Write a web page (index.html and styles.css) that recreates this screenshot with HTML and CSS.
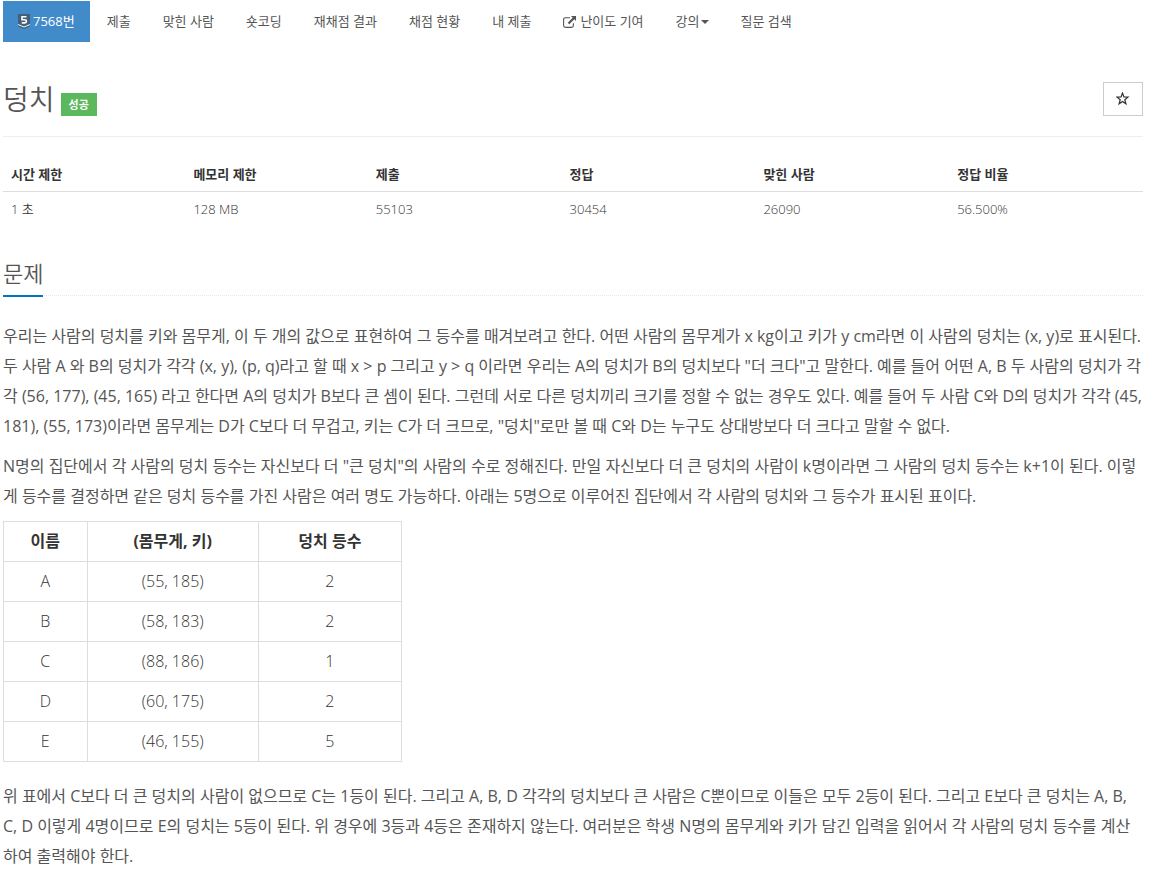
FILE: index.html
```html
<!DOCTYPE html>
<html lang="ko">
<head>
    <meta charset="UTF-8">
    <meta name="viewport" content="width=device-width, initial-scale=1.0">
    <title>7568번: 덩치</title>
    <link rel="stylesheet" href="styles.css">
</head>
<body>
    <div class="container">
        <nav>
            <ul class="problem-menu">
                <li class="active">
                    <a href="#">
                        <svg class="tier" viewBox="0 0 12 15" aria-hidden="true">
                            <path d="M0 0h12v10.500l-6 2.500l-6-2.500z" fill="#435f7a"/>
                            <path d="M0 11.300l6 2.400l6-2.400v1.200l-6 2.500l-6-2.500z" fill="#435f7a"/>
                            <path d="M0 10.500l6 2.500l6-2.500" fill="none" stroke="#fff" stroke-width="0.900"/>
                            <path d="M8.500 2.800h-4.500v2.900h2.500q1.900 0 1.900 1.600t-1.900 1.600h-2.700" fill="none" stroke="#fff" stroke-width="1.600"/>
                        </svg>
                        7568번
                    </a>
                </li>
                <li><a href="#">제출</a></li>
                <li><a href="#">맞힌 사람</a></li>
                <li><a href="#">숏코딩</a></li>
                <li><a href="#">재채점 결과</a></li>
                <li><a href="#">채점 현황</a></li>
                <li><a href="#">내 제출</a></li>
                <li>
                    <a href="#">
                        <svg class="external" viewBox="0 0 13 12" aria-hidden="true">
                            <path d="M7 1.700H2.500Q.600 1.700 .600 3.500v6Q.600 11.400 2.500 11.400h6q1.900 0 1.900-1.900V7.200" fill="none" stroke="#555" stroke-width="1.100"/>
                            <path d="M8 0h5v5l-1.700-1.700l-5 5l-1.600-1.600l5-5z" fill="#555"/>
                        </svg>
                        난이도 기여
                    </a>
                </li>
                <li><a href="#">강의<span class="caret"></span></a></li>
                <li><a href="#">질문 검색</a></li>
            </ul>
        </nav>

        <header class="page-header">
            <h1>덩치</h1>
            <span class="label-success">성공</span>
            <button type="button" class="button-star" aria-label="즐겨찾기">
                <svg viewBox="0 0 14 14" aria-hidden="true">
                    <path d="M6.500 1l1.400 3.900l4.100.200l-3.200 2.600l1.100 4.100L6.500 9.500l-3.400 2.300l1.100-4.100L1 5.100l4.100-.200z"/>
                </svg>
            </button>
        </header>

        <table class="problem-info">
            <thead>
                <tr>
                    <th class="limit">시간 제한</th>
                    <th class="limit">메모리 제한</th>
                    <th>제출</th>
                    <th>정답</th>
                    <th>맞힌 사람</th>
                    <th>정답 비율</th>
                </tr>
            </thead>
            <tbody>
                <tr>
                    <td>1 초</td>
                    <td>128 MB</td>
                    <td>55103</td>
                    <td>30454</td>
                    <td>26090</td>
                    <td>56.500%</td>
                </tr>
            </tbody>
        </table>

        <section>
            <div class="headline">
                <h2>문제</h2>
            </div>
            <div class="problem-text">
                <p>우리는 사람의 덩치를 키와 몸무게, 이 두 개의 값으로 표현하여 그 등수를 매겨보려고 한다. 어떤 사람의 몸무게가 x kg이고 키가 y cm라면 이 사람의 덩치는 (x, y)로 표시된다. 두 사람 A 와 B의 덩치가 각각 (x, y), (p, q)라고 할 때 x &gt; p 그리고 y &gt; q 이라면 우리는 A의 덩치가 B의 덩치보다 "더 크다"고 말한다. 예를 들어 어떤 A, B 두 사람의 덩치가 각각 (56, 177), (45, 165) 라고 한다면 A의 덩치가 B보다 큰 셈이 된다. 그런데 서로 다른 덩치끼리 크기를 정할 수 없는 경우도 있다. 예를 들어 두 사람 C와 D의 덩치가 각각 (45, 181), (55, 173)이라면 몸무게는 D가 C보다 더 무겁고, 키는 C가 더 크므로, "덩치"로만 볼 때 C와 D는 누구도 상대방보다 더 크다고 말할 수 없다.</p>
                <p>N명의 집단에서 각 사람의 덩치 등수는 자신보다 더 "큰 덩치"의 사람의 수로 정해진다. 만일 자신보다 더 큰 덩치의 사람이 k명이라면 그 사람의 덩치 등수는 k+1이 된다. 이렇게 등수를 결정하면 같은 덩치 등수를 가진 사람은 여러 명도 가능하다. 아래는 5명으로 이루어진 집단에서 각 사람의 덩치와 그 등수가 표시된 표이다.</p>
                <table class="rank-table">
                    <thead>
                        <tr>
                            <th class="name">이름</th>
                            <th class="size">(몸무게, 키)</th>
                            <th>덩치 등수</th>
                        </tr>
                    </thead>
                    <tbody>
                        <tr><td>A</td><td>(55, 185)</td><td>2</td></tr>
                        <tr><td>B</td><td>(58, 183)</td><td>2</td></tr>
                        <tr><td>C</td><td>(88, 186)</td><td>1</td></tr>
                        <tr><td>D</td><td>(60, 175)</td><td>2</td></tr>
                        <tr><td>E</td><td>(46, 155)</td><td>5</td></tr>
                    </tbody>
                </table>
                <p>위 표에서 C보다 더 큰 덩치의 사람이 없으므로 C는 1등이 된다. 그리고 A, B, D 각각의 덩치보다 큰 사람은 C뿐이므로 이들은 모두 2등이 된다. 그리고 E보다 큰 덩치는 A, B, C, D 이렇게 4명이므로 E의 덩치는 5등이 된다. 위 경우에 3등과 4등은 존재하지 않는다. 여러분은 학생 N명의 몸무게와 키가 담긴 입력을 읽어서 각 사람의 덩치 등수를 계산하여 출력해야 한다.</p>
            </div>
        </section>
    </div>
</body>
</html>
```
FILE: styles.css
```css
* {
    box-sizing: border-box;
}
body {
    margin: 0;
    background-color: #fff;
    color: #333;
    font-family: "Open Sans", "Noto Sans CJK KR", sans-serif;
    font-size: 13px;
    line-height: 21px;
}
.container {
    padding: 1px 8px 0 3px;
}

/* Problem menu */
.problem-menu {
    display: flex;
    flex-wrap: wrap;
    gap: 2px;
    margin: 0;
    padding: 0;
    list-style: none;
}
.problem-menu a {
    display: flex;
    align-items: center;
    padding: 10px 15px;
    color: #555;
    text-decoration: none;
}
.problem-menu .active a {
    background-color: #428bca;
    color: #fff;
}
.tier {
    width: 12px;
    height: 15px;
    margin-right: 3px;
}
.external {
    width: 13px;
    height: 12px;
    margin-right: 4px;
}
.caret {
    margin-left: 1px;
    border-top: 4px solid #555;
    border-left: 4px solid transparent;
    border-right: 4px solid transparent;
}

/* Title */
.page-header {
    display: flex;
    align-items: flex-end;
    margin-top: 40px;
    padding-bottom: 20px;
    border-bottom: 1px solid #eee;
}
h1,
h2 {
    margin: 0;
    color: #555;
    font-weight: 350;
}
h1 {
    font-size: 28px;
    line-height: 34px;
}
.label-success {
    margin-left: 6px;
    padding: 0 8px;
    background-color: #5cb85c;
    color: #fff;
    font-size: 11px;
    font-weight: 700;
    line-height: 23px;
}
.button-star {
    width: 40px;
    height: 34px;
    margin-left: auto;
    padding: 0 12px;
    border: 1px solid #ccc;
    background-color: #fff;
    cursor: pointer;
}
.button-star svg {
    display: block;
    width: 14px;
    height: 14px;
    fill: none;
    stroke: #333;
    stroke-width: 1.2;
}

/* Limits and submit counts */
.problem-info {
    width: 100%;
    margin-top: 20px;
    border-collapse: collapse;
    table-layout: fixed;
}
.problem-info th,
.problem-info td {
    padding: 7px 8px 6px;
    text-align: left;
}
.problem-info th {
    border-bottom: 1px solid #ddd;
    font-weight: 700;
}
.problem-info .limit {
    width: 16%;
}
.problem-info td {
    font-weight: 350;
}

/* Section title */
.headline {
    display: flex;
    margin: 30px 0 25px;
    border-bottom: 1px dotted #e4e9f0;
}
h2 {
    margin-bottom: -2px;
    padding-bottom: 5px;
    border-bottom: 2px solid #0076c0;
    font-size: 22px;
    line-height: 34px;
}

/* Problem text */
.problem-text {
    font-size: 16px;
    font-weight: 370;
    line-height: 30px;
}
.problem-text p {
    margin: 0 0 10px;
    color: #555;
}
.rank-table {
    width: 35%;
    margin-bottom: 19px;
    border-collapse: collapse;
    text-align: center;
}
.rank-table th,
.rank-table td {
    padding: 4px 8px 5px;
    border: 1px solid #ddd;
}
.rank-table td {
    font-weight: 350;
}
.rank-table th {
    font-weight: 700;
}
.rank-table .name {
    width: 21%;
}
.rank-table .size {
    width: 43%;
}
```
